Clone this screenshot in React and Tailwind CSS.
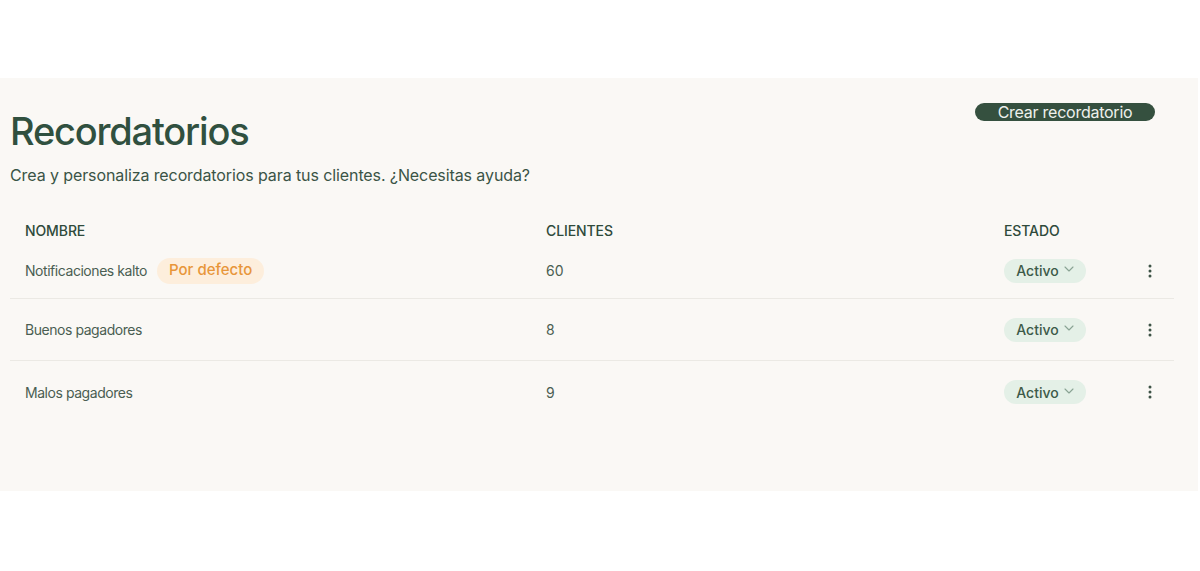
import React from 'react';

const reminders = [
  { id: 1, name: 'Notificaciones kalto', clients: 60, status: 'Activo', isDefault: true },
  { id: 2, name: 'Buenos pagadores', clients: 8, status: 'Activo' },
  { id: 3, name: 'Malos pagadores', clients: 9, status: 'Activo' },
];

const Chevron = () => (
  <svg width="10" height="6" viewBox="0 0 10 6" fill="none" className="ml-[5px] mt-[-3px]">
    <path d="M1 1l4 4 4-4" stroke="#8aa394" strokeWidth="1.1" strokeLinecap="round" strokeLinejoin="round" />
  </svg>
);

const Dots = () => (
  <svg width="4" height="14" viewBox="0 0 4 14" fill="#3d5346">
    <circle cx="2" cy="2" r="1.5" />
    <circle cx="2" cy="7" r="1.5" />
    <circle cx="2" cy="12" r="1.5" />
  </svg>
);

const Recordatorios = () => {
  return (
    <div className="min-h-screen bg-white pt-[78px] font-['Inter','Liberation_Sans',sans-serif]">
      <div className="w-[1198px] h-[413px] bg-[#faf8f5] pl-[10px] pr-[24px] pt-[25px]">
        {/* Header */}
        <div className="flex justify-between items-start">
          <div className="pt-[8px]">
            <h1 className="text-[38px] leading-[40px] font-medium text-[#30503f] tracking-[-1.2px]">Recordatorios</h1>
            <p className="mt-[12px] text-[16px] leading-[24px] text-[#3a5446] tracking-[-0.1px]">
              Crea y personaliza recordatorios para tus clientes. ¿Necesitas ayuda?
            </p>
          </div>
          <button className="mr-[19px] w-[180px] h-[18px] rounded-full bg-[#35503f] text-[#eef1ec] text-[16px] leading-[18px] tracking-[-0.25px] flex items-center justify-center">
            Crear recordatorio
          </button>
        </div>

        {/* Table */}
        <div className="mt-[33px]">
          <div className="flex h-[20px] items-center text-[14px] font-medium text-[#2f4a3b] uppercase tracking-[-0.1px]">
            <div className="w-[521px] pl-[15px]">Nombre</div>
            <div className="w-[458px] pl-[15px]">Clientes</div>
            <div className="flex-1 pl-[15px]">Estado</div>
          </div>
          {reminders.map((r, i) => (
            <div
              key={r.id}
              className={`flex items-center text-[14px] text-[#4a5e52] ${i === 0 ? 'h-[59px] pt-[3px]' : 'h-[62px]'} ${i < reminders.length - 1 ? 'border-b border-[#ebe9e4]' : ''}`}
            >
              <div className="w-[521px] pl-[15px] flex items-center">
                <span className="tracking-[-0.45px]">{r.name}</span>
                {r.isDefault && (
                  <span className="ml-[10px] h-[26px] px-[12px] rounded-full bg-[#fdeedc] text-[#e8963a] text-[15px] font-medium flex items-center">
                    Por defecto
                  </span>
                )}
              </div>
              <div className="w-[458px] pl-[15px]">{r.clients}</div>
              <div className="flex-1 pl-[15px] flex items-center justify-between pr-[22px]">
                <span className="h-[24px] w-[82px] rounded-full bg-[#e4f0e7] text-[#3d5a49] text-[14px] font-medium flex items-center justify-center">
                  {r.status}
                  <Chevron />
                </span>
                <Dots />
              </div>
            </div>
          ))}
        </div>
      </div>
    </div>
  );
};

export default Recordatorios;
